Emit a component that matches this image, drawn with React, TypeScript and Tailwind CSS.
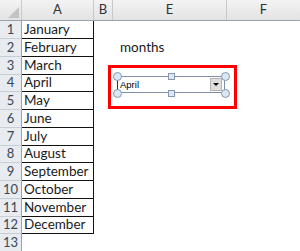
import React from 'react'

const months = [
  'January',
  'February',
  'March',
  'April',
  'May',
  'June',
  'July',
  'August',
  'September',
  'October',
  'November',
  'December',
]

// row heights in px (sheet is zoomed out a bit)
const heights = [18, 18, 18, 17, 18, 18, 18, 17, 18, 18, 18, 17]

const font = { fontFamily: 'Lato, "Liberation Sans", sans-serif' }

function Handle({ round, className }: { round?: boolean; className: string }) {
  return (
    <div
      className={`absolute border border-[#8497ad] bg-[#dbe8f3] ${
        round ? 'w-[9px] h-[9px] rounded-full' : 'w-[7px] h-[7px]'
      } ${className}`}
    />
  )
}

export default function App() {
  return (
    <div className="relative w-[300px] h-[251px] overflow-hidden bg-white text-[#1a1a1a]" style={font}>
      {/* column headers */}
      <div className="flex h-[21px] bg-gradient-to-b from-[#f3f3f3] to-[#e3e3e3] border-b border-[#9aa3ad] text-[13px] text-[#333]">
        <div className="relative w-[22px] border-r border-[#c9c9c9]">
          <div className="absolute right-[2px] bottom-[2px] w-0 h-0 border-l-[11px] border-l-transparent border-b-[11px] border-b-[#c3c3c3]" />
        </div>
        <div className="w-[72px] border-r border-[#c9c9c9] flex items-center justify-center">A</div>
        <div className="w-[19px] border-r border-[#c9c9c9] flex items-center justify-center">B</div>
        <div className="w-[114px] border-r border-[#c9c9c9] flex items-center justify-center">E</div>
        <div className="flex-1 flex items-center justify-center">F</div>
      </div>

      {/* rows */}
      {months.map((m, i) => (
        <div key={m} className="flex" style={{ height: heights[i] }}>
          <div className="w-[22px] shrink-0 bg-[#e8ebf0] border-r border-[#9aa3ad] border-b border-b-[#c8ced6] flex items-center justify-center text-[13px] text-[#3b4654]">
            {i + 1}
          </div>
          <div className="w-[72px] shrink-0 border-r border-b border-[#111] flex items-center pl-[2px] text-[13.5px] leading-none">
            {m}
          </div>
          <div className="w-[19px] shrink-0" />
          <div className="w-[114px] shrink-0 flex items-center pl-[7px] text-[13.5px] leading-none">
            {i === 1 ? 'months' : ''}
          </div>
          <div className="flex-1" />
        </div>
      ))}
      <div className="flex h-[17px]">
        <div className="w-[22px] shrink-0 bg-[#e8ebf0] border-r border-[#9aa3ad] flex items-center justify-center text-[13px] text-[#3b4654]">
          13
        </div>
      </div>

      {/* highlighted combo box control */}
      <div className="absolute left-[108px] top-[65px] w-[129px] h-[44px] border-[3px] border-[#ff0000]" />
      <div className="absolute left-[117px] top-[76px] w-[108px] h-[17px] bg-white border-t-[1.5px] border-b-[1.5px] border-r-[1.5px] border-[#7b8fa8]">
        <div className="absolute left-0 top-0 bottom-0 w-px bg-[#333]" />
        <div className="absolute left-[3px] top-[1px] text-[9.5px] leading-[14px] text-black" style={{ fontFamily: '"Liberation Sans", Arial, sans-serif' }}>
          April
        </div>
        <div className="absolute right-[2px] top-[1px] w-[12px] h-[13px] bg-[#dedede] border border-[#b4b4b4] flex items-center justify-center">
          <div className="w-0 h-0 border-l-[3px] border-r-[3px] border-t-[3px] border-l-transparent border-r-transparent border-t-black" />
        </div>
      </div>
      <Handle round className="left-[113px] top-[72px]" />
      <Handle round className="left-[221px] top-[72px]" />
      <Handle round className="left-[113px] top-[89px]" />
      <Handle round className="left-[221px] top-[89px]" />
      <Handle className="left-[168px] top-[73px]" />
      <Handle className="left-[168px] top-[90px]" />
    </div>
  )
}
